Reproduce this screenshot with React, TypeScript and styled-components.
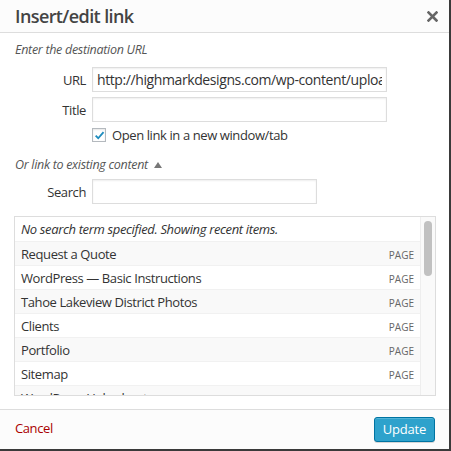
import styled, { createGlobalStyle } from 'styled-components';

const GlobalStyle = createGlobalStyle`
	html, body {
		margin: 0;
		padding: 0;
		background: #3a3a3a;
	}
	* {
		box-sizing: border-box;
	}
`;

type LinkItem = { title: string; kind: string };

const items: LinkItem[] = [
	{ title: 'Request a Quote', kind: 'Page' },
	{ title: 'WordPress — Basic Instructions', kind: 'Page' },
	{ title: 'Tahoe Lakeview District Photos', kind: 'Page' },
	{ title: 'Clients', kind: 'Page' },
	{ title: 'Portfolio', kind: 'Page' },
	{ title: 'Sitemap', kind: 'Page' },
	{ title: 'WordPress Help sheets', kind: 'Page' },
];

export default function App() {
	return (
		<>
			<GlobalStyle />
			<Dialog>
				<Header>
					<Title>Insert/edit link</Title>
					<CloseButton aria-label='Close'>
						<svg width='11' height='11' viewBox='0 0 11 11'>
							<path d='M1.5 1.5 L9.5 9.5 M9.5 1.5 L1.5 9.5' stroke='#666' strokeWidth='2.6' strokeLinecap='square' />
						</svg>
					</CloseButton>
				</Header>

				<Body>
					<Hint>Enter the destination URL</Hint>
					<Fields>
						<FieldRow>
							<Label>URL</Label>
							<TextInput defaultValue='http://highmarkdesigns.com/wp-content/uploads/2014/05/brochure.pdf' />
						</FieldRow>
						<FieldRow>
							<Label>Title</Label>
							<TextInput defaultValue='' />
						</FieldRow>
						<CheckRow>
							<span />
							<CheckLabel>
								<CheckBox>
									<svg width='11' height='11' viewBox='0 0 12 12'>
										<path d='M1.8 6.2 L4.6 9 L10.4 2.4' fill='none' stroke='#1e8cbe' strokeWidth='2' />
									</svg>
								</CheckBox>
								Open link in a new window/tab
							</CheckLabel>
						</CheckRow>
					</Fields>

					<Toggle>
						Or link to existing content <Arrow />
					</Toggle>

					<FieldRow>
						<Label>Search</Label>
						<TextInput defaultValue='' $width={225} />
					</FieldRow>

					<Results>
						<ResultList>
							<Notice>No search term specified. Showing recent items.</Notice>
							{items.map((item, i) => (
								<ResultRow key={item.title} $alt={i % 2 === 0}>
									<span>{item.title}</span>
									<Kind>{item.kind}</Kind>
								</ResultRow>
							))}
						</ResultList>
						<ScrollTrack>
							<ScrollThumb />
						</ScrollTrack>
					</Results>
				</Body>

				<Footer>
					<CancelLink href='#'>Cancel</CancelLink>
					<PrimaryButton>Update</PrimaryButton>
				</Footer>
			</Dialog>
		</>
	);
}

const Dialog = styled.div`
	width: 449px;
	height: 449px;
	background: #fff;
	display: flex;
	flex-direction: column;
	font-family: 'Open Sans', 'Liberation Sans', sans-serif;
	color: #444;
	letter-spacing: -0.4px;
`;

const Header = styled.div`
	height: 33px;
	flex: none;
	display: flex;
	align-items: center;
	justify-content: space-between;
	padding: 0 11px 0 15px;
	background: #fcfcfc;
	border-bottom: 1px solid #dddddd;
`;

const Title = styled.h1`
	margin: 0;
	font-size: 18px;
	font-weight: 600;
	line-height: 22px;
	letter-spacing: -0.6px;
	color: #444;
`;

const CloseButton = styled.button`
	border: 0;
	background: none;
	padding: 0;
	width: 12px;
	height: 12px;
	display: flex;
	align-items: center;
	justify-content: center;
`;

const Body = styled.div`
	flex: 1;
	padding: 8px 14px 0 15px;
	display: flex;
	flex-direction: column;
`;

const Hint = styled.p`
	margin: 0 0 8px;
	font-size: 12.5px;
	letter-spacing: -0.3px;
	line-height: 18px;
	font-style: italic;
	color: #555;
`;

const Fields = styled.div`
	display: flex;
	flex-direction: column;
	gap: 5px;
`;

const FieldRow = styled.label`
	display: grid;
	grid-template-columns: 71px auto;
	column-gap: 6px;
	align-items: center;
`;

const Label = styled.span`
	text-align: right;
	font-size: 13px;
	color: #333;
`;

const TextInput = styled.input<{ $width?: number }>`
	width: ${(p) => p.$width ?? 295}px;
	height: 25px;
	border: 1px solid #dddddd;
	box-shadow: inset 0 1px 2px rgba(0, 0, 0, 0.07);
	padding: 0 4px;
	font-family: 'Open Sans', 'Liberation Sans', sans-serif;
	font-size: 14px;
	letter-spacing: -0.4px;
	color: #333;
	outline: none;
`;

const CheckRow = styled.div`
	display: grid;
	grid-template-columns: 71px auto;
	column-gap: 6px;
`;

const CheckLabel = styled.label`
	display: flex;
	align-items: center;
	gap: 6px;
	font-size: 13px;
	color: #333;
	line-height: 16px;
`;

const CheckBox = styled.span`
	width: 14px;
	height: 14px;
	border: 1px solid #b4b9be;
	background: #fff;
	box-shadow: inset 0 1px 2px rgba(0, 0, 0, 0.1);
	display: flex;
	align-items: center;
	justify-content: center;
`;

const Toggle = styled.p`
	margin: 13px 0 5px;
	font-size: 12.5px;
	letter-spacing: -0.3px;
	line-height: 18px;
	font-style: italic;
	color: #555;
	display: flex;
	align-items: center;
	gap: 6px;
`;

const Arrow = styled.span`
	width: 0;
	height: 0;
	border-left: 4px solid transparent;
	border-right: 4px solid transparent;
	border-bottom: 6px solid #777;
`;

const Results = styled.div`
	margin-top: 12px;
	margin-left: -1px;
	width: 422px;
	height: 180px;
	border: 1px solid #dddddd;
	display: flex;
	overflow: hidden;
`;

const ResultList = styled.ul`
	flex: 1;
	margin: 0;
	padding: 0;
	list-style: none;
	overflow: hidden;
`;

const Notice = styled.li`
	height: 25px;
	padding: 0 6px;
	display: flex;
	align-items: center;
	font-size: 13px;
	letter-spacing: -0.35px;
	font-style: italic;
	color: #333;
	border-bottom: 1px solid #f1f1f1;
`;

const ResultRow = styled.li<{ $alt: boolean }>`
	height: 24px;
	padding: 0 6px;
	display: flex;
	align-items: center;
	justify-content: space-between;
	font-size: 13px;
	color: #333;
	background: ${(p) => (p.$alt ? '#f9f9f9' : '#fff')};
	border-bottom: 1px solid #f1f1f1;
`;

const Kind = styled.span`
	font-size: 10px;
	letter-spacing: 0;
	text-transform: uppercase;
	color: #666;
	padding-top: 3px;
`;

const ScrollTrack = styled.div`
	width: 15px;
	flex: none;
	background: #fafafa;
	border-left: 1px solid #eeeeee;
	padding: 4px 3px 0 3px;
`;

const ScrollThumb = styled.div`
	width: 8px;
	height: 55px;
	border-radius: 4px;
	background: #c1c1c1;
`;

const Footer = styled.div`
	height: 40px;
	flex: none;
	border-top: 1px solid #dddddd;
	background: #fcfcfc;
	display: flex;
	align-items: center;
	justify-content: space-between;
	padding: 0 14px 0 15px;
`;

const CancelLink = styled.a`
	font-size: 13px;
	color: #a00;
	text-decoration: none;
	margin-top: -4px;
`;

const PrimaryButton = styled.button`
	height: 25px;
	padding: 0 8px;
	border: 1px solid #0074a2;
	border-radius: 3px;
	background: #2ea2cc;
	box-shadow: inset 0 1px 0 rgba(120, 200, 230, 0.5), 0 1px 0 rgba(0, 0, 0, 0.15);
	color: #fff;
	font-family: 'Open Sans', 'Liberation Sans', sans-serif;
	font-size: 13px;
	letter-spacing: -0.2px;
	line-height: 23px;
`;
